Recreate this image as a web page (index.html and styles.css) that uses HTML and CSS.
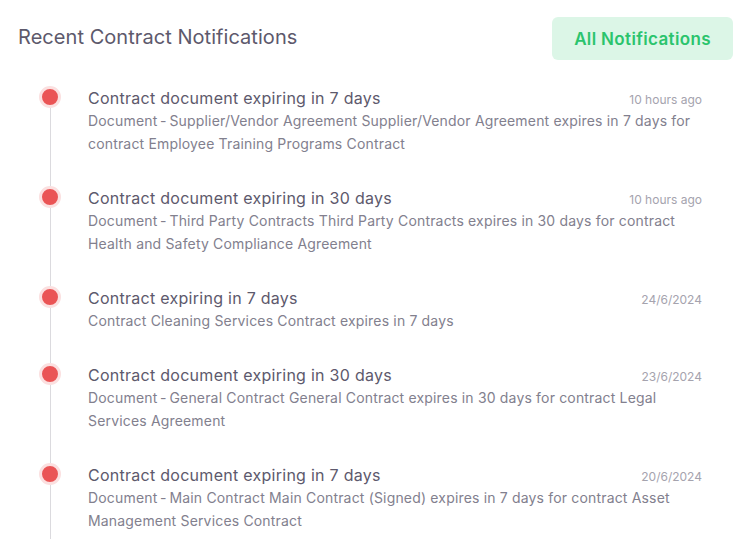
FILE: index.html
```html
<!DOCTYPE html>
<html lang="en">
<head>
<meta charset="utf-8">
<title>Recent Contract Notifications</title>
<link rel="stylesheet" href="styles.css">
</head>
<body>
<div class="card">
  <div class="card-header">
    <h2 class="card-title">Recent Contract Notifications</h2>
    <button class="btn-all">All Notifications</button>
  </div>
  <ul class="timeline">
    <li class="tl-item">
      <div class="tl-marker"><span class="tl-dot"></span><span class="tl-line"></span></div>
      <div class="tl-body">
        <div class="tl-head"><span class="tl-title">Contract document expiring in 7 days</span><span class="tl-time">10 hours ago</span></div>
        <p class="tl-desc">Document&thinsp;-&thinsp;Supplier/Vendor Agreement Supplier/Vendor Agreement expires in 7 days for contract Employee Training Programs Contract</p>
      </div>
    </li>
    <li class="tl-item">
      <div class="tl-marker"><span class="tl-dot"></span><span class="tl-line"></span></div>
      <div class="tl-body">
        <div class="tl-head"><span class="tl-title">Contract document expiring in 30 days</span><span class="tl-time">10 hours ago</span></div>
        <p class="tl-desc">Document&thinsp;-&thinsp;Third Party Contracts Third Party Contracts expires in 30 days for contract Health and Safety Compliance Agreement</p>
      </div>
    </li>
    <li class="tl-item">
      <div class="tl-marker"><span class="tl-dot"></span><span class="tl-line"></span></div>
      <div class="tl-body">
        <div class="tl-head"><span class="tl-title">Contract expiring in 7 days</span><span class="tl-time">24/6/2024</span></div>
        <p class="tl-desc">Contract Cleaning Services Contract expires in 7 days</p>
      </div>
    </li>
    <li class="tl-item">
      <div class="tl-marker"><span class="tl-dot"></span><span class="tl-line"></span></div>
      <div class="tl-body">
        <div class="tl-head"><span class="tl-title">Contract document expiring in 30 days</span><span class="tl-time">23/6/2024</span></div>
        <p class="tl-desc">Document&thinsp;-&thinsp;General Contract General Contract expires in 30 days for contract Legal Services Agreement</p>
      </div>
    </li>
    <li class="tl-item">
      <div class="tl-marker"><span class="tl-dot"></span><span class="tl-line"></span></div>
      <div class="tl-body">
        <div class="tl-head"><span class="tl-title">Contract document expiring in 7 days</span><span class="tl-time">20/6/2024</span></div>
        <p class="tl-desc">Document&thinsp;-&thinsp;Main Contract Main Contract (Signed) expires in 7 days for contract Asset Management Services Contract</p>
      </div>
    </li>
  </ul>
</div>
</body>
</html>
```

FILE: styles.css
```css
* { box-sizing: border-box; }
html, body { margin: 0; padding: 0; background: #ffffff; }
body {
  font-family: "Inter", "Noto Sans", sans-serif;
  color: #6f6b7d;
  overflow: hidden;
  height: 541px;
}
.card {
  padding: 17px 11px 0 18px;
}
.card-header {
  display: flex;
  justify-content: space-between;
  align-items: center;
  height: 43px;
}
.card-title {
  margin: 0;
  font-size: 20px;
  font-weight: 400;
  color: #5d596c;
  line-height: 28px;
  margin-top: -4px;
  letter-spacing: 0.05px;
}
.btn-all {
  width: 181px;
  height: 43px;
  border: none;
  border-radius: 6px;
  background: #dcf6e7;
  color: #2bc46d;
  font-family: inherit;
  font-size: 17px;
  font-weight: 600;
  letter-spacing: 0.35px;
  padding: 0;
}
.timeline {
  list-style: none;
  margin: 26px 0 0 0;
  padding: 0 31px 0 21px;
}
.tl-item {
  display: flex;
  gap: 27px;
  padding-bottom: 31px;
}
.tl-item:last-child { padding-bottom: 7px; }
.tl-marker {
  width: 22px;
  display: flex;
  flex-direction: column;
  align-items: center;
  margin-bottom: -31px;
  flex: none;
}
.tl-item:last-child .tl-marker { margin-bottom: -7px; }
.tl-dot {
  width: 22px;
  height: 22px;
  border-radius: 50%;
  background: #ea5455;
  border: 3px solid #fbe0e0;
  flex: none;
}
.tl-line {
  flex: 1;
  width: 1px;
  background: #dbdade;
}
.tl-body { flex: 1; min-width: 0; }
.tl-head {
  display: flex;
  justify-content: space-between;
  align-items: baseline;
  height: 23px;
  padding-top: 1px;
}
.tl-title {
  font-size: 16px;
  color: #5d596c;
  line-height: 23px;
  letter-spacing: 0.27px;
}
.tl-time {
  font-size: 12px;
  color: #a5a3ae;
  line-height: 23px;
}
.tl-desc {
  margin: 0;
  font-size: 14px;
  line-height: 23px;
  color: #82808e;
  letter-spacing: 0.17px;
}
```
